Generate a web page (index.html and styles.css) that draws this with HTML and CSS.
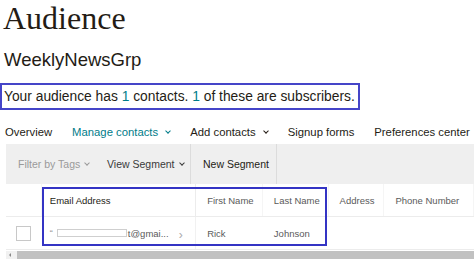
FILE: index.html
```html
<!DOCTYPE html>
<html lang="en">
<head>
    <meta charset="UTF-8">
    <title>Audience</title>
    <link rel="stylesheet" href="styles.css">
</head>
<body>
    <div class="page">
        <h1 class="title">Audience</h1>
        <h2 class="audName">WeeklyNewsGrp</h2>
        <div class="summary">
            Your audience has <span class="num">1</span> contacts. <span class="num">1</span> of these are subscribers.
        </div>

        <nav class="tabs">
            <a href="#">Overview</a>
            <a href="#" class="active">Manage contacts <span class="caret"></span></a>
            <a href="#">Add contacts <span class="caret"></span></a>
            <a href="#">Signup forms</a>
            <a href="#" class="last-tab">Preferences center</a>
        </nav>

        <div class="panel">
            <div class="toolbar">
                <div class="tool muted">Filter by Tags <span class="caret"></span></div>
                <div class="tool segment">View Segment <span class="caret bold"></span></div>
                <div class="tool strong">New Segment</div>
            </div>

            <div class="tableWrap">
                <div class="row head">
                    <div class="cell chk"></div>
                    <div class="cell email">Email Address</div>
                    <div class="cell first">First Name</div>
                    <div class="cell last">Last Name</div>
                    <div class="cell addr">Address</div>
                    <div class="cell phone">Phone Number</div>
                </div>
                <div class="row">
                    <div class="cell chk"><span class="box"></span></div>
                    <div class="cell email">
                        <span class="quote">&ldquo;</span><span class="redact"></span><span>t@gmai...</span><span class="more">&rsaquo;</span>
                    </div>
                    <div class="cell first">Rick</div>
                    <div class="cell last">Johnson</div>
                    <div class="cell addr"></div>
                    <div class="cell phone"></div>
                </div>
                <div class="highlight"></div>
            </div>

            <div class="scrollbar">
                <span class="arrow"></span>
                <span class="thumb"></span>
            </div>
        </div>
    </div>
</body>
</html>
```

FILE: styles.css
```css
html, body {
    margin: 0;
    padding: 0;
    background: #ffffff;
    color: #241c15;
    font-family: "Liberation Sans", Arial, sans-serif;
    overflow: hidden;
}

.page {
    width: 474px;
    height: 266px;
    overflow: hidden;
}

.title {
    margin: 0;
    padding: 0 0 0 3px;
    font-family: "Liberation Serif", Georgia, serif;
    font-weight: normal;
    font-size: 32px;
    line-height: 36px;
    height: 38px;
}

.audName {
    margin: 9px 0 0 0;
    padding: 1px 0 0 4px;
    font-weight: normal;
    font-size: 18.5px;
    line-height: 24px;
    height: 35px;
    box-sizing: border-box;
}

.summary {
    display: inline-block;
    margin-top: 1px;
    border: 2px solid #4545c8;
    padding: 3px 3px 2px 2px;
    font-size: 13.8px;
    line-height: 18px;
    white-space: nowrap;
}

.num {
    color: #007c89;
}

.tabs {
    display: flex;
    gap: 20px;
    padding: 15px 0 0 5px;
    height: 33px;
    box-sizing: border-box;
    white-space: nowrap;
    overflow: hidden;
}

.tabs a {
    color: #241c15;
    text-decoration: none;
    font-size: 11.3px;
    line-height: 15px;
}

.tabs a.active {
    color: #007c89;
}

.tabs a.last-tab {
    flex-shrink: 0;
}

.caret {
    display: inline-block;
    width: 3px;
    height: 3px;
    border-right: 1.3px solid currentColor;
    border-bottom: 1.3px solid currentColor;
    transform: rotate(45deg);
    margin: 0 0 3px 5px;
}

.panel {
    margin-left: 6px;
    margin-top: 1px;
}

.toolbar {
    display: flex;
    background: #efefef;
    height: 40px;
    font-size: 10.5px;
}

.tool {
    display: flex;
    align-items: center;
    box-sizing: border-box;
    padding-left: 12px;
    color: #3a3a3a;
    white-space: nowrap;
}

.tool.muted {
    width: 89px;
    color: #9a9a9a;
}

.tool.segment {
    width: 96px;
    border-right: 1px solid #dcdcdc;
}

.tool.strong {
    width: 86px;
    color: #241c15;
    border-right: 1px solid #dcdcdc;
}

.caret.bold {
    border-width: 1.6px;
}

.tableWrap {
    position: relative;
    font-size: 9.5px;
    color: #5a5a5a;
}

.row {
    display: flex;
    height: 32px;
    border-bottom: 1px solid #ececec;
}

.row .cell.email {
    border-right: 1px solid #f1f1f1;
}

.row.head .cell {
    border-right: 1px solid #f5f5f5;
}

.row.head .cell.email {
    color: #241c15;
    border-right-color: #ececec;
}

.cell {
    display: flex;
    align-items: center;
    box-sizing: border-box;
    white-space: nowrap;
}

.chk {
    width: 36px;
    justify-content: center;
}

.box {
    width: 15px;
    height: 15px;
    border: 1px solid #c8c8c8;
    box-sizing: border-box;
}

.email {
    width: 155px;
    padding-left: 8px;
}

.first {
    width: 67px;
    padding-left: 11px;
}

.last {
    width: 66px;
    padding-left: 11px;
}

.addr {
    width: 56px;
    padding-left: 11px;
}

.phone {
    width: 90px;
    padding-left: 11px;
}

.quote {
    color: #999;
    margin-right: 4px;
    font-size: 9px;
}

.redact {
    width: 70px;
    height: 8px;
    border: 1px solid #cfcfcf;
    box-sizing: border-box;
    margin-right: 1px;
}

.more {
    color: #aaa;
    margin-left: 10px;
    font-size: 12px;
    padding-top: 3px;
}

.highlight {
    position: absolute;
    left: 36px;
    top: 3px;
    width: 285px;
    height: 59px;
    border: 2px solid #3434c4;
    box-sizing: border-box;
    pointer-events: none;
}

.scrollbar {
    display: flex;
    height: 8px;
    margin-top: 1px;
    background: #f1f1f1;
}

.arrow {
    width: 0;
    height: 0;
    border-top: 2px solid transparent;
    border-bottom: 2px solid transparent;
    border-right: 2px solid #888;
    margin: 2px 4px 0 3px;
}

.thumb {
    flex: 1;
    background: #c1c1c1;
    margin-left: 2px;
}
```
